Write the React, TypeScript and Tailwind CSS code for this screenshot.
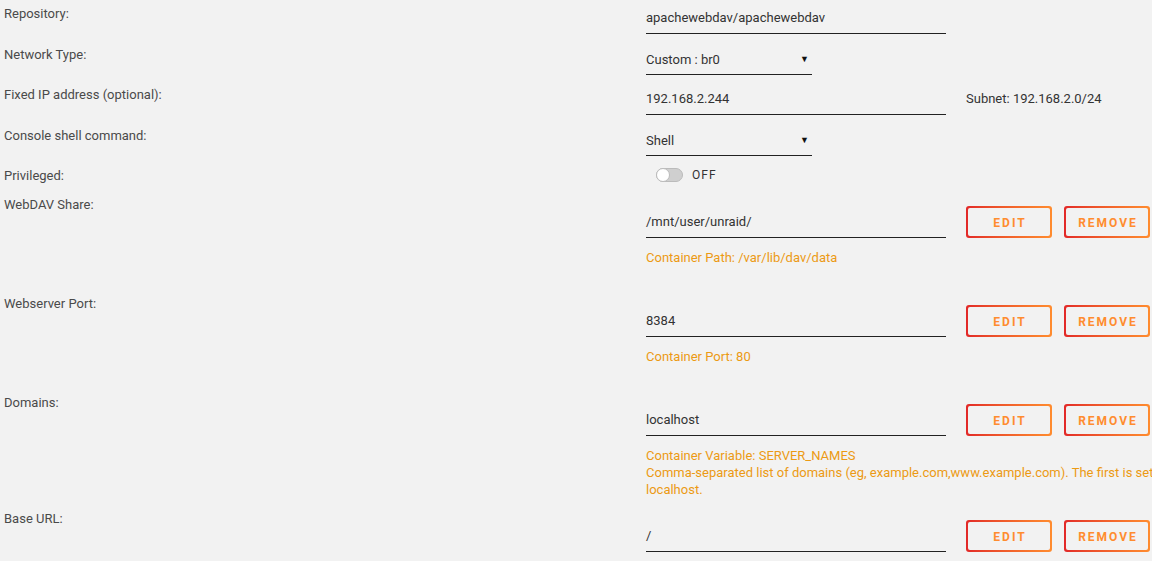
const font = { fontFamily: "Roboto, 'Liberation Sans', sans-serif" };

const Label = ({ children }: { children: React.ReactNode }) => (
  <div className="w-[646px] shrink-0 pl-1 pt-[3px] text-[13px] leading-[18px] text-[#4a4a4a]">{children}</div>
);

const TextField = ({ value }: { value: string }) => (
  <div className="flex h-8 w-[300px] items-center border-b border-[#222] text-[13px] text-[#333]">{value}</div>
);

const SelectField = ({ value }: { value: string }) => (
  <div className="flex h-8 w-[166px] items-center justify-between border-b border-[#222] pt-[3px] pr-[3px] text-[13px] text-[#333]">
    <span>{value}</span>
    <span className="text-[9px] leading-none text-[#111]">▼</span>
  </div>
);

const GradButton = ({ text }: { text: string }) => (
  <div className="h-8 w-[86px] rounded-[3px] bg-gradient-to-r from-[#e22828] to-[#ff8c2f] p-[2px]">
    <div className="flex h-full w-full items-center justify-center rounded-[2px] bg-[#f2f2f2] pt-[1px] pl-[2px] text-[12px] font-bold tracking-[2px] text-[#ff8c2f]">
      {text}
    </div>
  </div>
);

const SimpleRow = ({ label, children }: { label: string; children: React.ReactNode }) => (
  <div className="flex h-[40.5px]">
    <Label>{label}</Label>
    <div className="flex items-start">{children}</div>
  </div>
);

const ConfigRow = ({ label, value, help }: { label: string; value: string; help: React.ReactNode }) => (
  <div className="flex">
    <Label>{label}</Label>
    <div className="pt-[13px] pb-[9px]">
      <div className="flex items-center">
        <TextField value={value} />
        <div className="ml-5 flex gap-3">
          <GradButton text="EDIT" />
          <GradButton text="REMOVE" />
        </div>
      </div>
      <div className="mt-[11px] min-h-[34px] w-[560px] text-[13px] leading-[17px] text-[#ec9a14]">{help}</div>
    </div>
  </div>
);

export default function App() {
  return (
    <div className="h-[561px] w-full overflow-hidden bg-[#f2f2f2] pt-[2px]" style={font}>
      <SimpleRow label="Repository:">
        <TextField value="apachewebdav/apachewebdav" />
      </SimpleRow>
      <SimpleRow label="Network Type:">
        <SelectField value="Custom : br0" />
      </SimpleRow>
      <SimpleRow label="Fixed IP address (optional):">
        <TextField value="192.168.2.244" />
        <div className="ml-5 flex h-8 items-center text-[13px] text-[#333]">Subnet: 192.168.2.0/24</div>
      </SimpleRow>
      <SimpleRow label="Console shell command:">
        <SelectField value="Shell" />
      </SimpleRow>
      <div className="flex h-[29px]">
        <Label>Privileged:</Label>
        <div className="flex h-[22px] items-center pl-[10px]">
          <div className="relative h-[14px] w-[27px] rounded-full border border-[#bbb] bg-[#cfcfcf]">
            <div className="absolute left-[-1px] top-[-1px] h-[14px] w-[14px] rounded-full border border-[#bbb] bg-white" />
          </div>
          <span className="ml-[9px] text-[12px] tracking-[1px] text-[#333]">OFF</span>
        </div>
      </div>
      <ConfigRow label="WebDAV Share:" value="/mnt/user/unraid/" help="Container Path: /var/lib/dav/data" />
      <ConfigRow label="Webserver Port:" value="8384" help="Container Port: 80" />
      <ConfigRow
        label="Domains:"
        value="localhost"
        help={
          <>
            Container Variable: SERVER_NAMES
            <br />
            Comma-separated list of domains (eg, example.com,www.example.com). The first is set to localhost.
          </>
        }
      />
      <ConfigRow label="Base URL:" value="/" help="Container Variable: BASE_URL" />
    </div>
  );
}
